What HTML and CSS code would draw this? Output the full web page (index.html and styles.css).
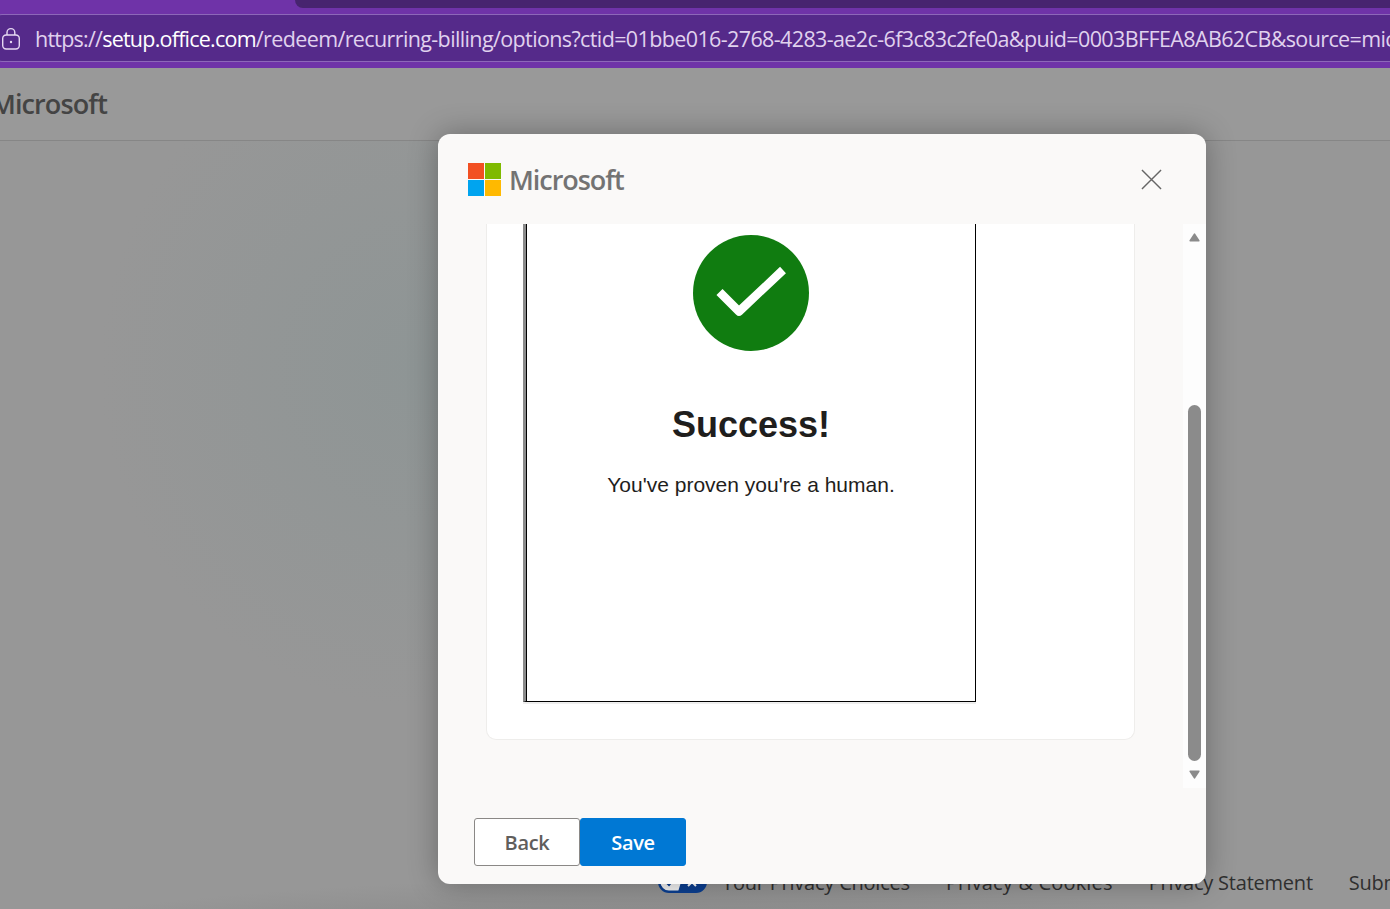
FILE: index.html
```html
<!DOCTYPE html>
<html lang="en">
<head>
<meta charset="utf-8">
<title>Microsoft</title>
<link rel="stylesheet" href="styles.css">
</head>
<body>
<div class="browser">
  <div class="tabstrip"><div class="tab"></div></div>
  <div class="address">
    <svg class="lock" width="20" height="24" viewBox="0 0 20 24" fill="none" stroke="#e6d9f2" stroke-width="1.4"><path d="M6 9V6.5a3.9 3.9 0 0 1 7.8 0V9"/><rect x="1.7" y="9" width="16.6" height="14" rx="3.5"/><circle cx="10" cy="16" r="1.2" fill="#e6d9f2" stroke="none"/></svg>
    <div class="url"><span class="dim tight">https://</span><span class="host">setup.office.com</span><span class="dim">/redeem/recurring-billing/options?ctid=01bbe016-2768-4283-ae2c-6f3c83c2fe0a&amp;puid=0003BFFEA8AB62CB&amp;source=microsoft</span></div>
  </div>
</div>
<div class="page">
  <header class="site-header"><span class="site-brand">Microsoft</span></header>
  <main class="site-main"></main>
  <footer class="site-footer">
    <svg class="choices" width="49" height="22" viewBox="0 0 49 22"><rect x="1.2" y="1.2" width="46.6" height="19.6" rx="9.8" fill="#f4f4f4" stroke="#0b3f91" stroke-width="2.4"/><path d="M26 1h12a10 10 0 0 1 0 20H20z" fill="#0b3f91"/><path d="M8 11l3 3 5-6" fill="none" stroke="#0b3f91" stroke-width="2"/><path d="M30 7l8 8M38 7l-8 8" stroke="#fff" stroke-width="2"/></svg>
    <span>Your Privacy Choices</span>
    <span class="wide">Privacy &amp; Cookies</span>
    <span>Privacy Statement</span>
    <span>Submit</span>
  </footer>
</div>
<section class="modal">
  <div class="modal-head">
    <div class="logo">
      <svg width="33" height="33" viewBox="0 0 33 33"><rect width="16" height="16" fill="#f25022"/><rect x="17" width="16" height="16" fill="#7fba00"/><rect y="17" width="16" height="16" fill="#00a4ef"/><rect x="17" y="17" width="16" height="16" fill="#ffb900"/></svg>
      <span class="logo-text">Microsoft</span>
    </div>
    <svg class="close" width="21" height="21" viewBox="0 0 22 22" stroke="#666" stroke-width="1.5"><path d="M1 1l20 20M21 1L1 21"/></svg>
  </div>
  <div class="modal-body">
    <div class="card">
      <div class="frame">
        <svg class="tick" width="116" height="116" viewBox="0 0 116 116"><circle cx="58" cy="58" r="58" fill="#107c10"/><path d="M26.5 57L46 76.5 90 35" fill="none" stroke="#fff" stroke-width="8.6" stroke-linejoin="round"/></svg>
        <h1 class="title">Success!</h1>
        <p class="note">You've proven you're a human.</p>
      </div>
    </div>
    <div class="scrollbar">
      <svg class="arrow" width="11" height="9" viewBox="0 0 11 9"><path d="M5.5 1.2L9.8 7.8H1.2z" fill="#8b8b8b" stroke="#8b8b8b" stroke-width="1.6" stroke-linejoin="round"/></svg>
      <div class="track"><div class="thumb"></div></div>
      <svg class="arrow" width="11" height="9" viewBox="0 0 11 9"><path d="M5.5 7.8L9.8 1.2H1.2z" fill="#8b8b8b" stroke="#8b8b8b" stroke-width="1.6" stroke-linejoin="round"/></svg>
    </div>
  </div>
  <div class="modal-foot">
    <button class="btn back">Back</button>
    <button class="btn save">Save</button>
  </div>
</section>
</body>
</html>
```
FILE: styles.css
```css
* { box-sizing: border-box; }
html, body { margin: 0; height: 100%; overflow: hidden; }
body { width: 1390px; height: 909px; display: flex; flex-direction: column; font-family: "Open Sans", "Noto Sans", sans-serif; background: #999; }

.browser { height: 68px; background: #6f33a8; flex: none; overflow: hidden; position: relative; z-index: 2; }
.tabstrip { height: 14px; display: flex; justify-content: flex-end; }
.tab { width: 1095px; height: 8px; background: #47246f; border-bottom-left-radius: 8px; }
.address { height: 48px; margin-left: -12px; display: flex; align-items: center; padding-left: 12px; gap: 14px; background: #552a8a; border: 1px solid #8d67b9; border-right: 0; border-radius: 14px 0 0 14px; }
.lock { flex: none; }
.url { font-size: 21.5px; white-space: nowrap; letter-spacing: -0.62px; }
.dim { color: #e0d2ee; }
.tight { letter-spacing: -0.77px; }
.host { color: #fff; letter-spacing: -0.77px; }

.page { flex: 1; display: flex; flex-direction: column; min-height: 0; background: radial-gradient(320px 340px at 420px 300px, #8e9595 0%, rgba(142, 149, 149, 0) 100%), radial-gradient(800px 120px at 640px 930px, #767676 0%, rgba(118, 118, 118, 0) 100%), #979797; }
.site-header { height: 73px; flex: none; background: #999; border-bottom: 1px solid #868686; display: flex; align-items: center; padding-bottom: 2px; }
.site-brand { margin-left: -9px; font-size: 27px; font-weight: 600; letter-spacing: -0.9px; color: #444; }
.site-main { flex: 1; }
.site-footer { height: 52px; flex: none; display: flex; align-items: center; gap: 36px; padding: 0 0 2px 658px; color: #2f2f2f; font-size: 20px; white-space: nowrap; overflow: hidden; letter-spacing: -0.22px; }
.wide { letter-spacing: 0.17px; }
.choices { flex: none; margin-right: -21px; }

.modal { position: absolute; left: 438px; top: 134px; width: 768px; height: 750px; background: #faf9f8; border-radius: 12px; display: flex; flex-direction: column; overflow: hidden; box-shadow: 0 0 30px rgba(0, 0, 0, 0.3); }
.modal-head { height: 90px; flex: none; display: flex; align-items: center; justify-content: space-between; padding: 1px 44px 0 30px; }
.logo { display: flex; align-items: center; gap: 8px; }
.logo-text { font-size: 27px; font-weight: 600; letter-spacing: -1.05px; color: #737373; line-height: 33px; }
.close { flex: none; }
.modal-body { height: 564px; flex: none; display: flex; padding-left: 48px; justify-content: space-between; }
.card { width: 649px; height: 516px; background: #fff; border: 1px solid #eeedeb; border-top: 0; border-radius: 0 0 10px 10px; padding-left: 36px; }
.frame { width: 453px; height: 478px; background: #fff; border-left: 3px solid #8a8a8a; border-right: 1px solid #000; border-bottom: 1px solid #000; box-shadow: inset 1px 0 0 #000, 0 2px 0 0 #eee; display: flex; flex-direction: column; align-items: center; padding: 11px 0 0 1px; font-family: "Liberation Sans", Arial, sans-serif; }
.tick { flex: none; }
.title { margin: 53px 0 0; font-size: 36px; line-height: 42px; font-weight: 700; color: #1f1e1d; }
.note { margin: 26px 0 0; font-size: 21px; line-height: 26px; color: #1f1e1d; }
.scrollbar { width: 23px; height: 564px; background: #fdfdfd; display: flex; flex-direction: column; align-items: center; padding: 9px 0 9px; }
.arrow { flex: none; }
.track { flex: 1; width: 13px; display: flex; align-items: flex-end; padding-bottom: 9px; }
.thumb { width: 13px; height: 356px; background: #8b8b8b; border-radius: 7px; }
.modal-foot { flex: 1; display: flex; padding: 30px 0 0 36px; align-items: flex-start; }
.btn { width: 106px; height: 48px; font-family: "Open Sans", "Noto Sans", sans-serif; font-size: 20px; font-weight: 600; letter-spacing: -0.35px; border-radius: 3px; padding: 1px 0 0; }
.back { background: #fff; border: 1px solid #8a8886; color: #605e5c; }
.save { background: #0078d4; border: 1px solid #0078d4; color: #fff; }
```
